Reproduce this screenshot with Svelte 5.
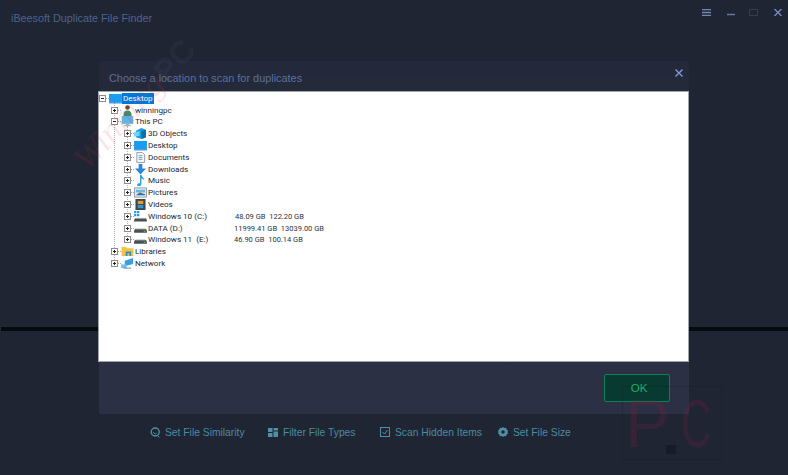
<script>
	const rows = [
		{ level: 0, open: true, icon: 'desktop', label: 'Desktop', selected: true },
		{ level: 1, icon: 'user', label: 'winningpc' },
		{ level: 1, open: true, icon: 'pc', label: 'This PC' },
		{ level: 2, icon: 'cube', label: '3D Objects' },
		{ level: 2, icon: 'desktop', label: 'Desktop' },
		{ level: 2, icon: 'doc', label: 'Documents' },
		{ level: 2, icon: 'down', label: 'Downloads' },
		{ level: 2, icon: 'music', label: 'Music' },
		{ level: 2, icon: 'picture', label: 'Pictures' },
		{ level: 2, icon: 'video', label: 'Videos' },
		{ level: 2, icon: 'win', label: 'Windows 10 (C:)', size: '48.09 GB  122.20 GB', col: 86 },
		{ level: 2, icon: 'drive', label: 'DATA (D:)', size: '11999.41 GB  13039.00 GB', col: 85 },
		{ level: 2, icon: 'drive', label: 'Windows 11  (E:)', size: '46.90 GB  100.14 GB', col: 85 },
		{ level: 1, icon: 'folder', label: 'Libraries' },
		{ level: 1, icon: 'network', label: 'Network' }
	];
</script>

<div class="page">
	<header class="titlebar">
		<span class="title">iBeesoft Duplicate File Finder</span>
		<div class="controls">
			<svg width="9" height="7" viewBox="0 0 9 7"><path d="M0 .7h9M0 3.500h9M0 6.300h9" stroke="#7487ad" stroke-width="1.300" /></svg>
			<svg width="8" height="7" viewBox="0 0 8 7"><path d="M0 5.500h8" stroke="#6478a0" stroke-width="1.500" /></svg>
			<svg class="max" width="9" height="7" viewBox="0 0 9 7"><rect x=".5" y=".5" width="8" height="6" fill="none" stroke="#343c4e" /></svg>
			<svg width="8" height="7" viewBox="0 0 8 7"><path d="M.5 0l7 7M7.500 0l-7 7" stroke="#7488c8" stroke-width="1.400" /></svg>
		</div>
	</header>
	<div class="rule"></div>
	<nav class="toolbar">
		<span class="tool sim">
			<svg width="11" height="11" viewBox="0 0 11 11"><circle cx="5.200" cy="5" r="4" fill="none" stroke="#4f90a5" stroke-width="1.400" /><path d="M3.500 5a2 2 0 0 0 3 1.500M7 8l2.500 2.500" fill="none" stroke="#4f90a5" /></svg>
			Set File Similarity
		</span>
		<span class="tool types">
			<svg width="10" height="9" viewBox="0 0 10 9"><path d="M0 0h4.500v4H0zM5.500 0H10v2.500H5.500zM0 5h4.500v4H0zM5.500 3.500H10V9H5.500z" fill="#4f90a5" /></svg>
			Filter File Types
		</span>
		<span class="tool hidden">
			<svg width="10" height="10" viewBox="0 0 10 10"><rect x=".5" y=".5" width="9" height="9" fill="none" stroke="#4f90a5" /><path d="M2.500 5l2 2L7.500 3" fill="none" stroke="#4f90a5" /></svg>
			Scan Hidden Items
		</span>
		<span class="tool size">
			<svg width="10" height="10" viewBox="0 0 10 10"><path d="M5 0l1.300 1 1.700-.2.600 1.600L10 3.500 9.500 5l.5 1.500-1.400 1.100-.6 1.600-1.700-.2L5 10 3.700 9l-1.700.2-.6-1.600L0 6.500.5 5 0 3.500l1.400-1.100L2 .8l1.700.2z" fill="#4f90a5" /><circle cx="5" cy="5" r="1.800" fill="#1f2533" /></svg>
			Set File Size
		</span>
	</nav>

	<section class="dialog">
		<div class="dialog-head">
			<span>Choose a location to scan for duplicates</span>
			<svg width="8" height="8" viewBox="0 0 8 8"><path d="M.5.5l7 7M7.500.5l-7 7" stroke="#7f9ad8" stroke-width="1.400" /></svg>
		</div>
		<div class="tree">
			<div class="guide g1"></div>
			<div class="guide g2"></div>
			{#each rows as row}
				<div class="row level{row.level}">
					<span class="toggle">
						<i class="minus"></i>
						{#if !row.open}<i class="plus"></i>{/if}
					</span>
					<span class="dash"></span>
					<svg class="icon" width="13" height="11" viewBox="0 0 14 12">
						{#if row.icon === 'desktop'}
							<rect x="0" y="1" width="14" height="9.500" fill="#1a9bf0" />
							<path d="M0 10.500h14v.8H0z" fill="#0b6cb8" />
						{:else if row.icon === 'user'}
							<circle cx="7" cy="2.800" r="2.500" fill="#6b4a32" />
							<path d="M2.500 12c0-4 1.500-6 4.500-6s4.500 2 4.500 6z" fill="#3e8c6b" />
						{:else if row.icon === 'pc'}
							<rect x="1" y="0" width="12" height="8.500" fill="#5fb4ea" stroke="#8fa8bb" stroke-width=".6" />
							<path d="M5 8.500h4v1.500H5zM3 10h8v1.200H3z" fill="#a3b2bd" />
						{:else if row.icon === 'cube'}
							<path d="M2 3l6-3 5 2v8l-5 2-6-2z" fill="#1b9ee0" />
							<path d="M8 3.500l5-1.500v8l-5 2z" fill="#0c6fa8" />
							<path d="M0 4.500l6-1v5l-6 1z" fill="#6fd4f5" />
						{:else if row.icon === 'doc'}
							<path d="M3 .5h6l2.500 2.500v8.500H3z" fill="#f3f6f9" stroke="#8a97a5" />
							<path d="M5 4h4M5 6h4M5 8h4" stroke="#6f97bb" />
						{:else if row.icon === 'down'}
							<path d="M5 0h4v5h4l-6 6.500L1 5h4z" fill="#2a86d8" />
						{:else if row.icon === 'music'}
							<path d="M6.500 0h1.500c.3 2 3 3 3 5.500-1-1.300-2-1.600-3-1.800V10c0 1.300-1.500 2-3 2S3 11 3.500 10c.5-1 2-1.300 3-1z" fill="#2a9ee8" />
						{:else if row.icon === 'picture'}
							<rect x=".5" y="1" width="13" height="10" fill="#dfeaf2" stroke="#8b9aa8" />
							<path d="M2 3h10v3H2z" fill="#6eb6e2" />
							<path d="M2 9l4-3 6 2v1z" fill="#3d6a86" />
						{:else if row.icon === 'video'}
							<rect x="1.500" y="0" width="11" height="12" fill="#3b4650" />
							<rect x="4" y="2" width="6" height="3.500" fill="#e09a32" />
							<rect x="4" y="6.500" width="6" height="3.500" fill="#3f93c9" />
						{:else if row.icon === 'win'}
							<path d="M0 0h2.500v2.500H0zM3.200 0h2.500v2.500H3.200zM0 3.200h2.500v2.500H0zM3.200 3.200h2.500v2.500H3.200z" fill="#21a0ea" />
							<path d="M1 8h12l1 2v1.500H0V10z" fill="#4a4f55" />
							<path d="M1.500 8h11" stroke="#a9b0b6" />
						{:else if row.icon === 'drive'}
							<path d="M1 6.500h12l1 2v2H0v-2z" fill="#4a4f55" />
							<path d="M1.500 6.500h11" stroke="#a9b0b6" />
							<path d="M10.500 9h2" stroke="#5fd06a" />
						{:else if row.icon === 'folder'}
							<path d="M.5 1h5l1.500 1.500h6.500V11H.5z" fill="#f5c242" />
							<path d="M5 6h6v5H9V8H7v3H5z" fill="#2d8fd8" />
						{:else}
							<path d="M4 3l9-3v6.500L4 9z" fill="#3a9fe0" />
							<path d="M0 7h6v4H0z" fill="#6dc0ee" />
							<path d="M3 11h8" stroke="#5b7d97" />
						{/if}
					</svg>
					<span class="name" class:selected={row.selected} style:min-width={row.col ? `${row.col}px` : null}>{row.label}</span>
					{#if row.size}<span class="sizes">{row.size}</span>{/if}
				</div>
			{/each}
		</div>
		<div class="dialog-foot">
			<button class="ok">OK</button>
		</div>
	</section>

	<div class="mark-text"><span>Winning</span><b>PC</b></div>
	<div class="mark-logo">
		<span>P</span><span class="mark-c">C</span>
		<i class="mark-dot"></i>
	</div>
</div>

<style>
	:global(body) {
		margin: 0;
		background: #1f2533;
	}
	.page {
		position: relative;
		height: 475px;
		overflow: hidden;
		display: flex;
		flex-direction: column;
		background: #1f2533;
		font-family: 'Liberation Sans', Arial, sans-serif;
	}
	.titlebar {
		display: flex;
		justify-content: space-between;
		padding: 11px 6px 0 11px;
		height: 327px;
		flex: none;
		box-sizing: border-box;
	}
	.title {
		font-size: 10.800px;
		line-height: 14px;
		color: #4d638f;
	}
	.controls {
		display: flex;
		gap: 16px;
		height: 7px;
		margin-top: -2px;
	}
	.controls .max {
		margin-left: -2px;
	}
	.rule {
		height: 3.500px;
		background: #060c0e;
		margin: 0 0 0 1px;
		flex: none;
	}
	.toolbar {
		display: flex;
		padding: 95px 0 0 150px;
		font-size: 10.300px;
		line-height: 13px;
		color: #4b8ba0;
	}
	.tool {
		display: inline-flex;
		align-items: center;
		gap: 4px;
		white-space: nowrap;
	}
	.types,
	.hidden,
	.size {
		gap: 5px;
	}
	.sim { width: 118px; }
	.types { width: 112px; }
	.hidden { width: 118px; }
	.dialog {
		position: absolute;
		left: 99px;
		top: 61px;
		width: 590px;
		height: 353px;
		display: flex;
		flex-direction: column;
		background: linear-gradient(#23293a 0, #252a3b 30px, #2b3044 310px);
	}
	.dialog-head {
		height: 31px;
		flex: none;
		display: flex;
		justify-content: space-between;
		align-items: flex-start;
		box-sizing: border-box;
		padding: 10px 6px 0 10px;
		font-size: 10.900px;
		line-height: 14px;
		color: #5a6f9c;
	}
	.dialog-head svg {
		margin-top: -2px;
	}
	.tree {
		position: relative;
		overflow: hidden;
		height: 269px;
		box-sizing: border-box;
		padding-top: 0.500px;
		flex: none;
		width: 589px;
		background: #fff;
		outline: 1px solid #a2a4ac;
		font-family: Roboto, 'Noto Sans', sans-serif;
		font-size: 8.100px;
		color: #1d2733;
	}
	.row {
		position: relative;
		display: flex;
		align-items: center;
		height: 11.800px;
		white-space: pre;
		line-height: 11px;
	}
	.level1 { padding-left: 12px; }
	.level2 { padding-left: 25px; }
	.toggle {
		position: relative;
		box-sizing: border-box;
		width: 7px;
		height: 7px;
		flex: none;
		border: 1px solid #8d8d8d;
		background: #fff;
	}
	.minus,
	.plus {
		position: absolute;
		background: #222;
	}
	.minus {
		left: 1px;
		top: 2px;
		width: 3px;
		height: 1px;
	}
	.plus {
		left: 2px;
		top: 1px;
		width: 1px;
		height: 3px;
	}
	.dash {
		width: 3px;
		flex: none;
		border-top: 1px dotted #a5a5a5;
	}
	.icon {
		flex: none;
	}
	.name {
		padding: 0 1px;
	}
	.selected {
		background: #0078d7;
		color: #fff;
	}
	.sizes {
		font-size: 7.500px;
		color: #2a3440;
	}
	.guide {
		position: absolute;
		border-left: 1px dotted #b5b5b5;
	}
	.g1 { left: 15px; top: 10px; height: 160px; }
	.g2 { left: 28px; top: 34px; height: 114px; }
	.mark-text {
		position: absolute;
		left: 80px;
		top: 150px;
		transform-origin: left center;
		transform: rotate(-48deg);
		white-space: nowrap;
		font-family: 'Liberation Serif', serif;
		font-style: italic;
		font-size: 35px;
		line-height: 30px;
		color: rgba(225, 50, 50, 0.12);
		pointer-events: none;
	}
	.mark-text b {
		font-family: 'Liberation Sans', sans-serif;
		font-style: normal;
		font-size: 32px;
		margin-left: 2px;
		color: rgba(255, 255, 255, 0.05);
	}
	.mark-logo {
		position: absolute;
		left: 622px;
		top: 386px;
		width: 100px;
		height: 74px;
		box-sizing: border-box;
		border: 1px solid rgba(20, 24, 34, 0.25);
		display: flex;
		gap: 11px;
		padding: 2px 0 0 2px;
		font-family: 'Liberation Sans', sans-serif;
		font-size: 68px;
		line-height: 68px;
		color: rgba(120, 35, 60, 0.25);
		pointer-events: none;
	}
	.mark-c {
		display: inline-block;
		transform: scaleX(0.62);
		transform-origin: left center;
	}
	.mark-dot {
		position: absolute;
		left: 43px;
		top: 58px;
		width: 10px;
		height: 9px;
		background: #171b26;
		border-radius: 2px;
	}
	.dialog-foot {
		flex: 1;
		position: relative;
	}
	.ok {
		position: absolute;
		left: 505px;
		top: 13px;
		width: 66px;
		height: 28px;
		border: 1px solid #0f7f56;
		border-radius: 2px;
		background: #083a31;
		color: #18b36a;
		font: 11.500px 'Liberation Sans', Arial, sans-serif;
		padding: 0 0 0 4px;
	}
</style>
